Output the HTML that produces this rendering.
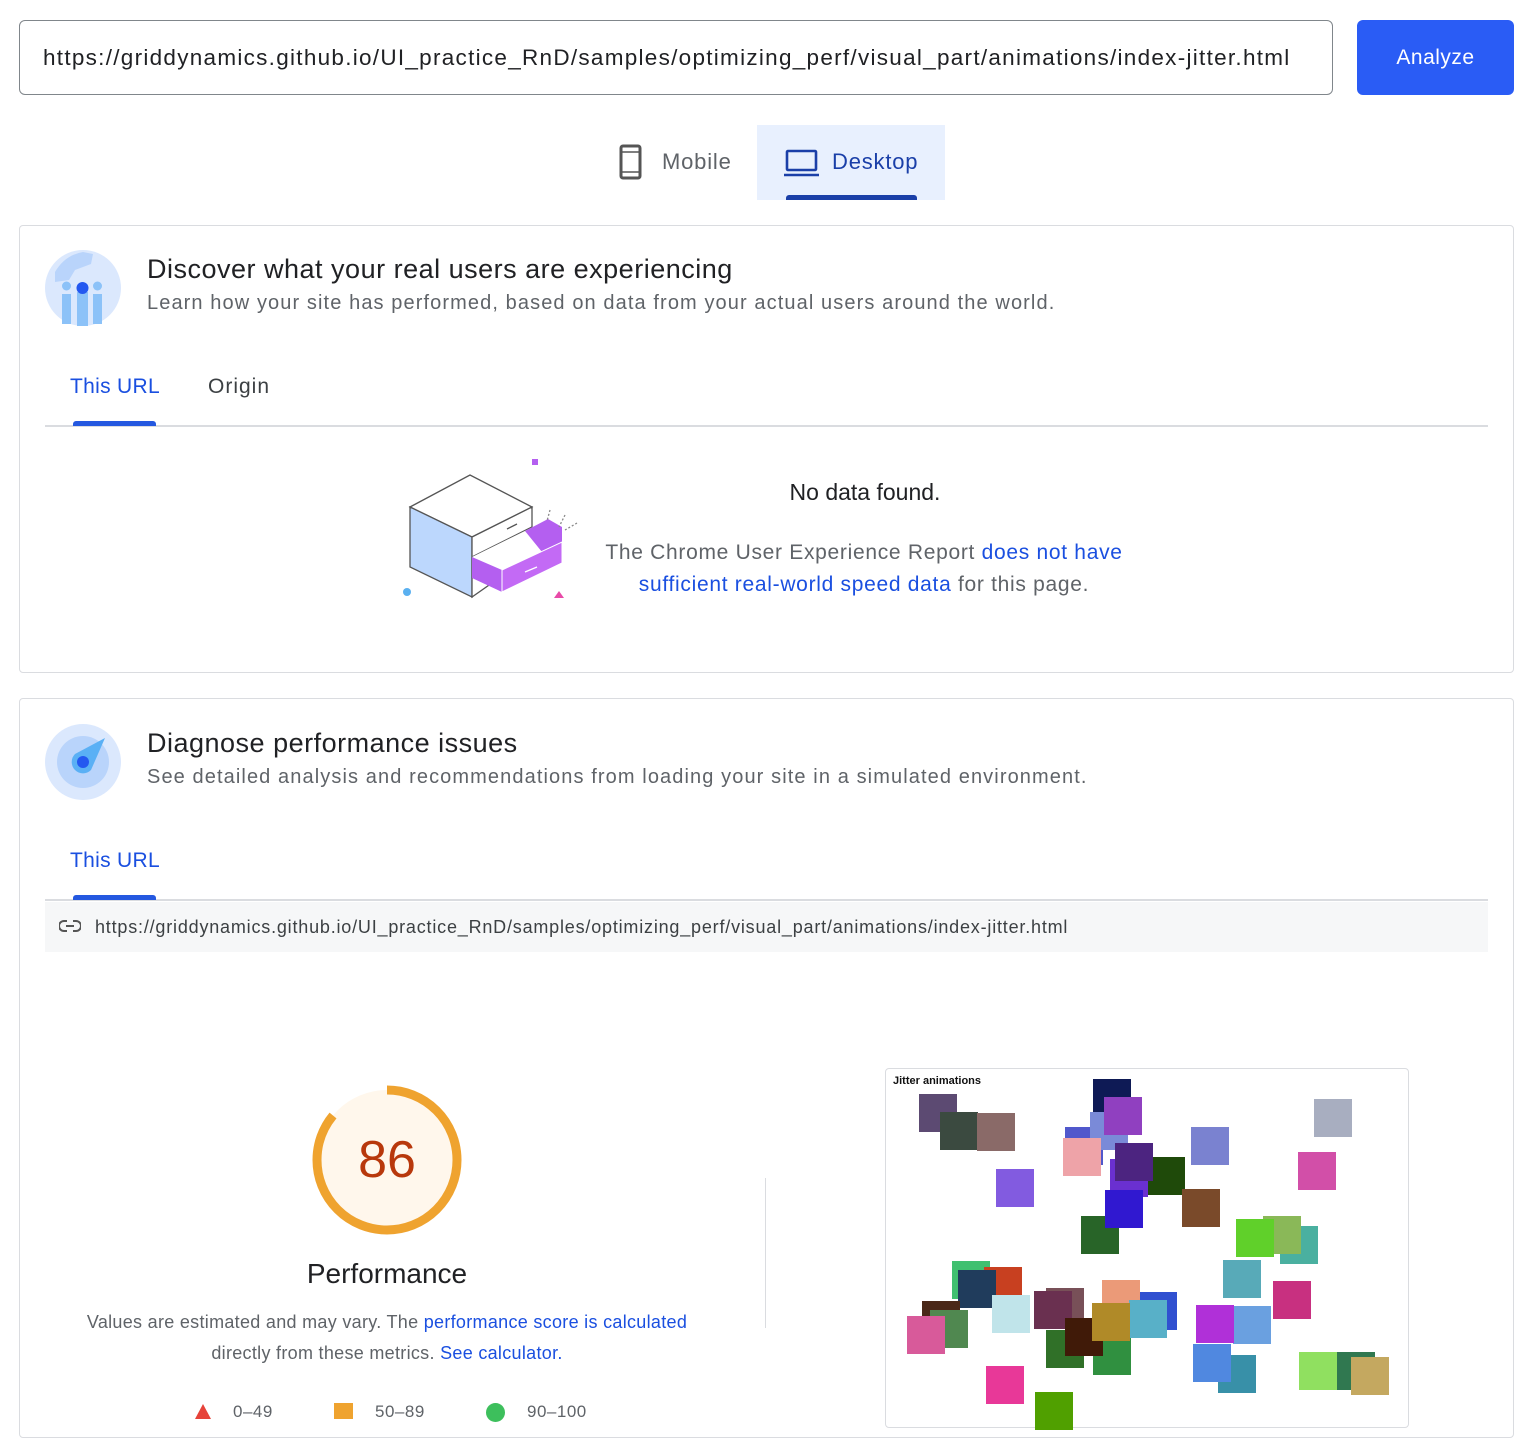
<!DOCTYPE html>
<html><head><meta charset="utf-8"><style>
*{margin:0;padding:0;box-sizing:border-box}
body{width:1536px;height:1418px;overflow:hidden;background:#fff;font-family:"Liberation Sans",Arial,sans-serif;position:relative;color:#202124}
.a{position:absolute;white-space:nowrap}
.blue{color:#1a4fe0}
.card{position:absolute;left:19px;width:1495px;border:1px solid #dadce0;border-radius:4px;background:#fff}
.sq{position:absolute;width:38px;height:38px}
</style></head><body>
<div class="a" style="left:19px;top:20px;width:1314px;height:75px;border:1px solid #80868b;border-radius:6px"></div>
<div class="a" style="left:43px;top:45px;font-size:22.5px;letter-spacing:1.28px;color:#202124">https://griddynamics.github.io/UI_practice_RnD/samples/optimizing_perf/visual_part/animations/index-jitter.html</div>
<div class="a" style="left:1357px;top:20px;width:157px;height:75px;background:#2a5cf5;border-radius:6px;color:#fff;font-size:21px;letter-spacing:0.5px;text-align:center;line-height:75px">Analyze</div>

<div class="a" style="left:757px;top:125px;width:188px;height:75px;background:#e8f0fe"></div>
<div class="a" style="left:786px;top:195px;width:131px;height:5px;background:#1a3fa8;border-radius:3px 3px 0 0"></div>
<svg class="a" style="left:618px;top:144px" width="26" height="36"><rect x="3" y="2" width="19" height="32" rx="2" fill="none" stroke="#555" stroke-width="3"/><line x1="4" y1="8" x2="21" y2="8" stroke="#555" stroke-width="1.5"/><line x1="4" y1="28" x2="21" y2="28" stroke="#555" stroke-width="1.5"/></svg>
<div class="a" style="left:662px;top:149px;font-size:22px;letter-spacing:0.8px;color:#5f6368">Mobile</div>
<svg class="a" style="left:784px;top:148px" width="36" height="30"><rect x="3" y="3" width="29" height="19" rx="1" fill="none" stroke="#1a3fa8" stroke-width="2.6"/><line x1="0" y1="27" x2="35" y2="27" stroke="#1a3fa8" stroke-width="2.6"/></svg>
<div class="a" style="left:832px;top:149px;font-size:22px;letter-spacing:0.8px;color:#1a3fa8">Desktop</div>

<div class="card" style="top:225px;height:448px"></div>
<svg class="a" style="left:45px;top:250px" width="76" height="76"><circle cx="38" cy="38" r="38" fill="#dbe8fd"/><path d="M10 22 Q20 5 38 2 L48 4 L46 14 L30 20 L24 30 L10 32 Z" fill="#b9d4fb"/><rect x="17" y="44" width="9" height="30" fill="#8cc2f8"/><rect x="32" y="42" width="11" height="34" fill="#8cc2f8"/><rect x="48" y="44" width="9" height="30" fill="#8cc2f8"/><circle cx="21.5" cy="36" r="4.5" fill="#8cc2f8"/><circle cx="37.5" cy="38" r="6" fill="#2458f0"/><circle cx="52.5" cy="36" r="4.5" fill="#8cc2f8"/></svg>
<div class="a" style="left:147px;top:254px;font-size:27px;letter-spacing:0.5px;color:#202124">Discover what your real users are experiencing</div>
<div class="a" style="left:147px;top:292px;font-size:20px;letter-spacing:1.1px;color:#5f6368">Learn how your site has performed, based on data from your actual users around the world.</div>
<div class="a blue" style="left:70px;top:375px;font-size:21px;letter-spacing:0.3px">This URL</div>
<div class="a" style="left:208px;top:375px;font-size:21px;letter-spacing:1px;color:#3c4043">Origin</div>
<div class="a" style="left:45px;top:425px;width:1443px;height:2px;background:#dadce0"></div>
<div class="a" style="left:73px;top:421px;width:83px;height:5px;background:#2458e0;border-radius:3px 3px 0 0"></div>

<svg class="a" style="left:395px;top:455px" width="190" height="150">
<rect x="137" y="4" width="6" height="6" fill="#b45ff0"/>
<circle cx="12" cy="137" r="4" fill="#5ab0f0"/>
<path d="M159 143 L164 136 L169 143Z" fill="#e84aa8"/>
<path d="M15 52 L75 20 L137 52 L77 82Z" fill="#fff" stroke="#555" stroke-width="1.3"/>
<path d="M15 52 L77 82 L77 142 L15 112Z" fill="#bcd7fd" stroke="#555" stroke-width="1.3"/>
<path d="M77 82 L137 52 L137 100 L77 142Z" fill="#fff" stroke="#555" stroke-width="1.3"/>
<path d="M77 102 L137 72" stroke="#555" stroke-width="1.3"/>
<path d="M112 74 L122 69" stroke="#555" stroke-width="1.3"/>
<path d="M77 102 L138 72 L167 87 L107 115Z" fill="#fff"/>
<path d="M130 76 L153 64 L167 72 L167 87 L147 97Z" fill="#b45ff0"/>
<path d="M77 102 L107 115 L107 137 L77 123Z" fill="#b45ff0"/>
<path d="M107 115 L167 87 L167 108 L107 137Z" fill="#c36af5" stroke="#fff" stroke-width="1"/>
<path d="M130 117 L142 112" stroke="#fff" stroke-width="1.3"/>
<path d="M155 55 L152 66 M170 60 L164 72 M182 68 L170 75" stroke="#888" stroke-width="1.3" stroke-dasharray="2 2"/>
</svg>
<div class="a" style="left:605px;top:479px;width:520px;text-align:center;font-size:23px;color:#202124">No data found.</div>
<div class="a" style="left:595px;top:537px;width:538px;text-align:center;font-size:21px;letter-spacing:0.7px;color:#5f6368;line-height:32px;white-space:normal">The Chrome User Experience Report <span class="blue">does not have sufficient real-world speed data</span> for this page.</div>

<div class="card" style="top:698px;height:740px"></div>
<svg class="a" style="left:45px;top:724px" width="76" height="76"><circle cx="38" cy="38" r="38" fill="#dbe8fd"/><circle cx="38" cy="38" r="26" fill="#b9d4fb"/><path d="M30 30 L60 14 L46 46 A11 11 0 1 1 30 30Z" fill="#5ab0f5"/><circle cx="38" cy="38" r="6" fill="#2458f0"/></svg>
<div class="a" style="left:147px;top:728px;font-size:27px;letter-spacing:0.5px;color:#202124">Diagnose performance issues</div>
<div class="a" style="left:147px;top:766px;font-size:20px;letter-spacing:1.1px;color:#5f6368">See detailed analysis and recommendations from loading your site in a simulated environment.</div>
<div class="a blue" style="left:70px;top:849px;font-size:21px;letter-spacing:0.3px">This URL</div>
<div class="a" style="left:45px;top:899px;width:1443px;height:2px;background:#dadce0"></div>
<div class="a" style="left:73px;top:895px;width:83px;height:5px;background:#2458e0;border-radius:3px 3px 0 0"></div>
<div class="a" style="left:45px;top:902px;width:1443px;height:50px;background:#f6f7f8"></div>
<svg class="a" style="left:59px;top:918px" width="22" height="16"><path d="M8 3 H5 A5 5 0 0 0 5 13 H8 M14 3 H17 A5 5 0 0 1 17 13 H14 M7 8 H15" fill="none" stroke="#555" stroke-width="2"/></svg>
<div class="a" style="left:95px;top:917px;font-size:18px;letter-spacing:0.8px;color:#3c4043">https://griddynamics.github.io/UI_practice_RnD/samples/optimizing_perf/visual_part/animations/index-jitter.html</div>

<svg class="a" style="left:307px;top:1080px" width="160" height="160"><circle cx="80" cy="80" r="70" fill="#fff7ec"/><circle cx="80" cy="80" r="70" fill="none" stroke="#efa32f" stroke-width="9" stroke-dasharray="378 440" transform="rotate(-90 80 80)"/></svg>
<div class="a" style="left:307px;top:1130px;width:160px;text-align:center;font-size:52px;color:#b8380c">86</div>
<div class="a" style="left:287px;top:1258px;width:200px;text-align:center;font-size:28px;color:#202124">Performance</div>
<div class="a" style="left:40px;top:1307px;width:694px;text-align:center;font-size:18px;letter-spacing:0.3px;line-height:31px;color:#5f6368;white-space:normal">Values are estimated and may vary. The <span class="blue">performance score is calculated</span><br>directly from these metrics. <span class="blue">See calculator.</span></div>
<svg class="a" style="left:194px;top:1403px" width="18" height="16"><path d="M1 16 L9 1 L17 16Z" fill="#e6433a"/></svg>
<div class="a" style="left:233px;top:1402px;font-size:17px;letter-spacing:0.5px;color:#5f6368">0–49</div>
<div class="a" style="left:334px;top:1403px;width:19px;height:16px;background:#efa32f"></div>
<div class="a" style="left:375px;top:1402px;font-size:17px;letter-spacing:0.5px;color:#5f6368">50–89</div>
<div class="a" style="left:486px;top:1403px;width:19px;height:19px;border-radius:50%;background:#3dbf5c"></div>
<div class="a" style="left:527px;top:1402px;font-size:17px;letter-spacing:0.5px;color:#5f6368">90–100</div>
<div class="a" style="left:765px;top:1178px;width:1px;height:150px;background:#dadce0"></div>

<div class="a" style="left:885px;top:1068px;width:524px;height:360px;border:1px solid #dadce0;border-radius:4px;overflow:hidden">
<div class="a" style="left:7px;top:6px;font-size:11px;font-weight:bold;color:#111">Jitter animations</div>
</div>
<div class="sq" style="left:919px;top:1094px;background:#5c4a72"></div>
<div class="sq" style="left:940px;top:1112px;background:#3b4a40"></div>
<div class="sq" style="left:977px;top:1113px;background:#8a6a68"></div>
<div class="sq" style="left:1093px;top:1079px;background:#0e1a55"></div>
<div class="sq" style="left:1065px;top:1127px;background:#5058cc"></div>
<div class="sq" style="left:1090px;top:1112px;background:#7a8ad8"></div>
<div class="sq" style="left:1104px;top:1097px;background:#9040c0"></div>
<div class="sq" style="left:1063px;top:1138px;background:#eea3a8"></div>
<div class="sq" style="left:996px;top:1169px;background:#825be0"></div>
<div class="sq" style="left:1191px;top:1127px;background:#7a82d0"></div>
<div class="sq" style="left:1314px;top:1099px;background:#a8aec0"></div>
<div class="sq" style="left:1298px;top:1152px;background:#d24fa8"></div>
<div class="sq" style="left:1147px;top:1157px;background:#1f4a0a"></div>
<div class="sq" style="left:1110px;top:1159px;background:#6a30d0"></div>
<div class="sq" style="left:1115px;top:1143px;background:#4c2480"></div>
<div class="sq" style="left:1081px;top:1216px;background:#286428"></div>
<div class="sq" style="left:1105px;top:1190px;background:#3018d0"></div>
<div class="sq" style="left:1182px;top:1189px;background:#7a4a2a"></div>
<div class="sq" style="left:1280px;top:1226px;background:#4ab0a0"></div>
<div class="sq" style="left:1263px;top:1216px;background:#8ab858"></div>
<div class="sq" style="left:1236px;top:1219px;background:#60d02a"></div>
<div class="sq" style="left:1223px;top:1260px;background:#58aab8"></div>
<div class="sq" style="left:1273px;top:1281px;background:#c83080"></div>
<div class="sq" style="left:952px;top:1261px;background:#40c070"></div>
<div class="sq" style="left:984px;top:1267px;background:#c84020"></div>
<div class="sq" style="left:958px;top:1270px;background:#203c5c"></div>
<div class="sq" style="left:922px;top:1301px;background:#4a2818"></div>
<div class="sq" style="left:930px;top:1310px;background:#508850"></div>
<div class="sq" style="left:907px;top:1316px;background:#d85a9a"></div>
<div class="sq" style="left:992px;top:1295px;background:#c0e4ea"></div>
<div class="sq" style="left:1046px;top:1288px;background:#785058"></div>
<div class="sq" style="left:1034px;top:1291px;background:#6a3050"></div>
<div class="sq" style="left:1046px;top:1330px;background:#307028"></div>
<div class="sq" style="left:1093px;top:1337px;background:#309040"></div>
<div class="sq" style="left:1065px;top:1318px;background:#401a08"></div>
<div class="sq" style="left:1139px;top:1292px;background:#3050d0"></div>
<div class="sq" style="left:1102px;top:1280px;background:#eb9a78"></div>
<div class="sq" style="left:1129px;top:1300px;background:#58b0c8"></div>
<div class="sq" style="left:1092px;top:1303px;background:#b08a28"></div>
<div class="sq" style="left:1233px;top:1306px;background:#6aa0e0"></div>
<div class="sq" style="left:1196px;top:1305px;background:#b030d8"></div>
<div class="sq" style="left:1218px;top:1355px;background:#3890a8"></div>
<div class="sq" style="left:1193px;top:1344px;background:#5088e0"></div>
<div class="sq" style="left:1299px;top:1352px;background:#90e060"></div>
<div class="sq" style="left:1337px;top:1352px;background:#307850"></div>
<div class="sq" style="left:1351px;top:1357px;background:#c4a860"></div>
<div class="sq" style="left:986px;top:1366px;background:#e83898"></div>
<div class="sq" style="left:1035px;top:1392px;background:#50a000"></div>
</body></html>
